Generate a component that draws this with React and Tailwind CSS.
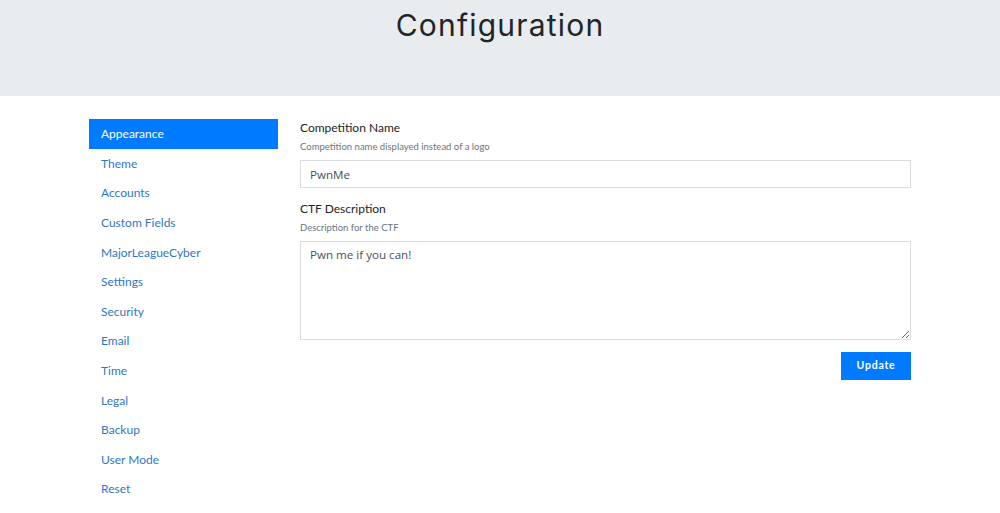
const items = [
  'Appearance',
  'Theme',
  'Accounts',
  'Custom Fields',
  'MajorLeagueCyber',
  'Settings',
  'Security',
  'Email',
  'Time',
  'Legal',
  'Backup',
  'User Mode',
  'Reset',
];

export default function App() {
  return (
    <div className="min-h-screen bg-white font-['Lato','Liberation_Sans',sans-serif] text-[#212529]">
      {/* Jumbotron */}
      <div className="h-[96px] bg-[#e9ecef] flex justify-center">
        <h1 className="mt-[5px] text-[30px] leading-[40px] tracking-[1.2px] text-[#212529] font-['Inter','Liberation_Sans',sans-serif] font-normal">
          Configuration
        </h1>
      </div>

      <div className="w-[822px] mx-auto pt-[23px] flex gap-[22px]">
        {/* Sidebar */}
        <nav className="w-[189px] shrink-0 flex flex-col">
          {items.map((item, i) => (
            <a
              key={item}
              href="#"
              className={`h-[29.6px] flex items-center px-[12px] pt-[1px] text-[12px] ${
                i === 0 ? 'bg-[#007bff] text-white' : 'text-[#2f78c3]'
              }`}
            >
              {item}
            </a>
          ))}
        </nav>

        {/* Form */}
        <div className="w-[611px] flex flex-col">
          <label className="text-[12px] leading-[18px] text-[#212529]">Competition Name</label>
          <p className="text-[9.5px] leading-[12px] mt-[4px] text-[#6c757d]">
            Competition name displayed instead of a logo
          </p>
          <input
            defaultValue="PwnMe"
            className="mt-[7px] h-[28px] w-full border border-[#d9dde2] px-[9px] text-[11.6px] text-[#495057] outline-none font-['Open_Sans','Liberation_Sans',sans-serif]"
          />

          <label className="text-[12px] leading-[18px] mt-[12px] text-[#212529]">CTF Description</label>
          <p className="text-[9.5px] leading-[12px] mt-[4px] text-[#6c757d]">Description for the CTF</p>
          <textarea
            defaultValue="Pwn me if you can!"
            className="mt-[7px] h-[99px] w-full border border-[#d9dde2] px-[9px] py-[4px] text-[11.6px] text-[#495057] outline-none font-['Open_Sans','Liberation_Sans',sans-serif]"
          />

          <div className="flex justify-end mt-[12px]">
            <button className="w-[70px] h-[28px] bg-[#007bff] text-white text-[10.5px] font-bold tracking-[0.8px]">
              Update
            </button>
          </div>
        </div>
      </div>
    </div>
  );
}
